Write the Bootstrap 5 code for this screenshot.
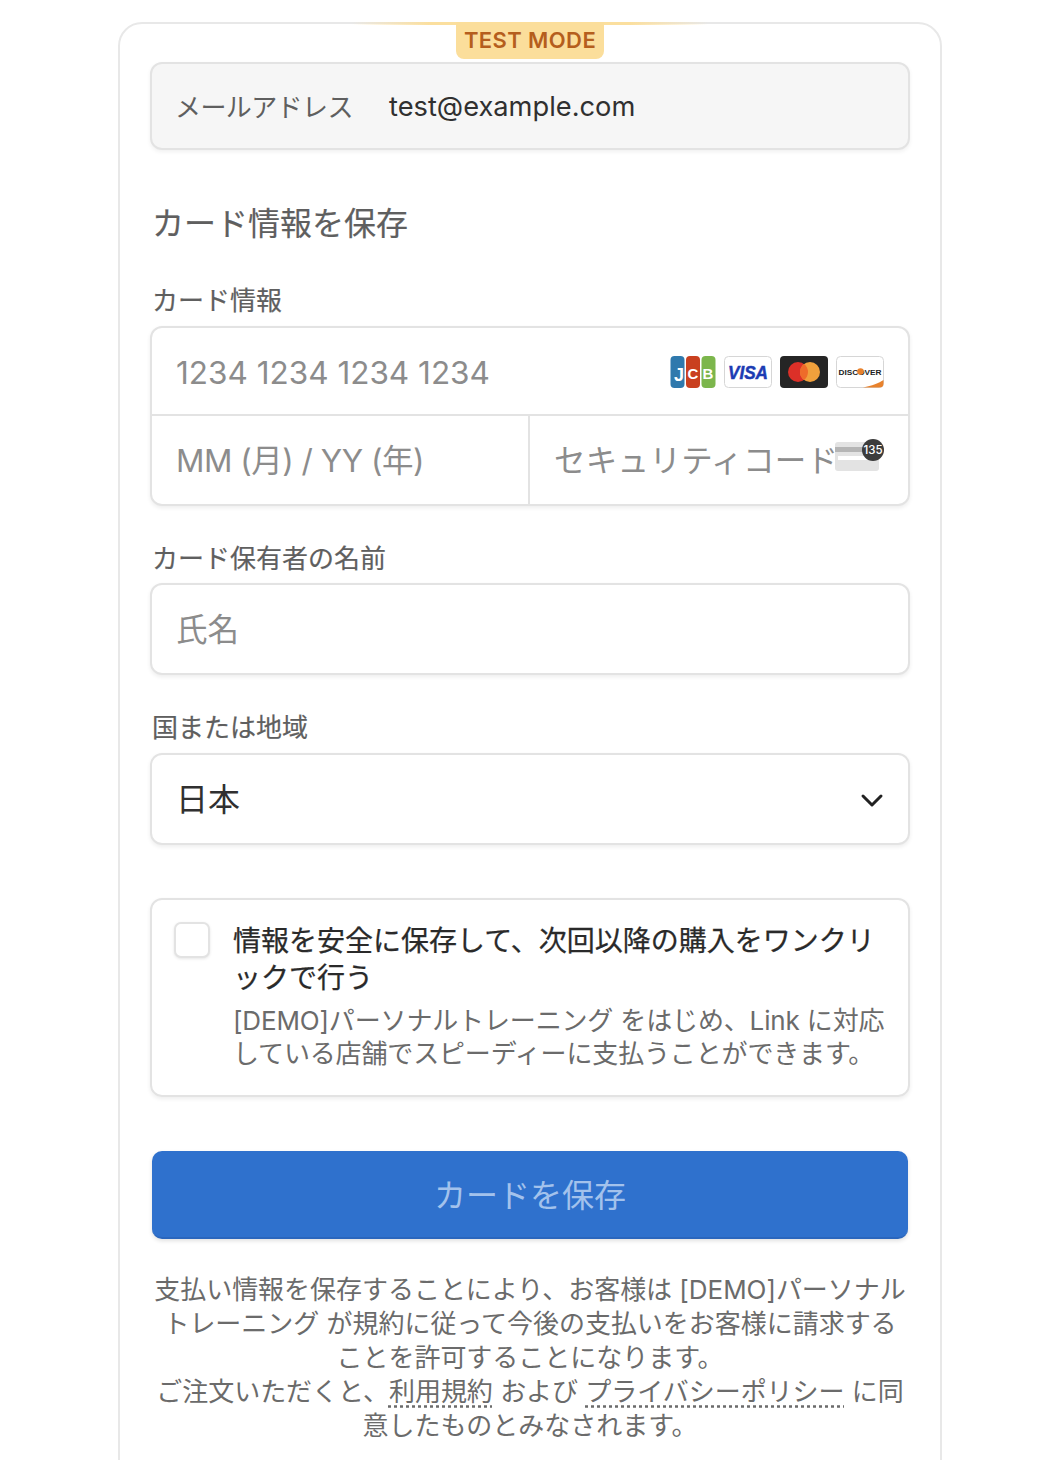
<!DOCTYPE html>
<html lang="ja">
<head>
<meta charset="utf-8">
<title>カードを保存</title>
<link href="https://cdn.jsdelivr.net/npm/bootstrap@5.3.0/dist/css/bootstrap.min.css" rel="stylesheet">
<style>
html,body{height:1460px;overflow:hidden;background:#fff}
body{font-family:Inter,"Noto Sans CJK JP",sans-serif;color:#303030;margin:0}
.shell{width:824px;height:1500px;margin:22px 0 0 118px;border:2px solid #e8e8e8;border-radius:24px;padding:38px 30px 0;position:relative}
.topline{position:absolute;left:232px;top:-2px;width:356px;height:3px;background:linear-gradient(90deg,transparent,#fbdf9e 22%,#fbdf9e 78%,transparent)}
.testtag{position:absolute;left:336px;top:-2px;width:148px;height:37px;background:#fbde9b;color:#b55e1d;font-size:22px;font-weight:600;line-height:37px;text-align:center;border-radius:0 0 8px 8px;letter-spacing:.4px}
.mailbox{height:88px;background:#f6f6f6;border:2px solid #e3e3e3;border-radius:12px;box-shadow:0 2px 4px rgba(0,0,0,.06);padding:2px 24px 0 23px;font-size:26px}
.mailbox .mlabel{color:#5f5f5f;width:213px;letter-spacing:-.6px}
.mailbox .mval{font-size:27.25px;color:#303030;margin-left:1px}
.headline{font-size:32px;font-weight:400;color:#5f5f5f;line-height:40px;margin:54px 0 0 2px;-webkit-text-stroke:.2px #5f5f5f}
.flabel{font-size:26px;color:#5f5f5f;line-height:32px;margin:36px 0 10px 2px;font-weight:400;-webkit-text-stroke:.2px #5f5f5f}
.flabel-first{margin-top:41px;margin-bottom:9px}
.flabel-tight{margin-top:37px;margin-bottom:8px}
.flabel-last{margin-top:37px;margin-bottom:9px}
.fieldbox{border:2px solid #e3e3e3;border-radius:12px;box-shadow:0 2px 4px rgba(0,0,0,.07);background:#fff;overflow:hidden}
.ph{color:#8c8c8c;font-size:31.5px;line-height:40px}
.ph-mixed{letter-spacing:-.5px}
.ph-code{letter-spacing:.3px}
.rowh{height:86px;padding:3px 24px 0}
.brandset{margin-bottom:2px}
.rowsplit{height:90px;border-top:2px solid #e3e3e3}
.splitcell{padding:2px 24px 0;position:relative;flex:1 1 0}
.splitcell-left{flex:none;width:376px}
.splitcell-right{border-left:2px solid #e3e3e3;padding-left:24px}
.brand{width:48px;height:32px;display:block}
.brand-jcb{width:46px}
.cvcicon{position:absolute;right:24px;top:23px}
.cvctext{position:relative;z-index:1}
.singleh{height:92px;padding:2px 24px 0}
.selh{height:92px;padding:2px 24px 0;font-size:32px;color:#303030}
.optbox{height:199px;border:2px solid #e3e3e3;border-radius:12px;box-shadow:0 2px 4px rgba(0,0,0,.07);padding:22px 18px 0 22px;margin-top:53px}
.tick{width:36px;height:36px;border:2px solid #e3e3e3;border-radius:7px;box-shadow:0 1px 3px rgba(0,0,0,.1);flex:none;margin-right:23px;background:#fff}
.opttitle{font-size:28px;font-weight:400;line-height:36.5px;color:#2a2a2a;margin-top:1px;-webkit-text-stroke:.25px #2a2a2a}
.optsub{font-size:26px;line-height:33px;color:#6b6b6b;margin-top:8px;letter-spacing:-.15px}
.savebtn{height:88px;width:756px;margin:54px 0 0 2px;padding-top:4px;background:#2f71cd;border:0;border-bottom:2px solid #2a66bd;border-radius:10px;box-shadow:0 2px 4px rgba(0,0,0,.12);color:#a3c2ec;font-size:32px;font-weight:400;font-family:inherit}
.legal{font-size:26px;line-height:34px;color:#6b6b6b;text-align:center;margin:34px 3px 0;letter-spacing:-.03px}
.legal a{display:inline-block;color:#6b6b6b;text-decoration:underline dotted;text-underline-offset:4px}
</style>
</head>
<body>
<div class="shell">
  <div class="topline"></div>
  <div class="testtag">TEST MODE</div>
  <div class="mailbox d-flex align-items-center"><span class="mlabel">メールアドレス</span><span class="mval">test@example.com</span></div>
  <div class="headline">カード情報を保存</div>
  <div class="flabel flabel-first">カード情報</div>
  <div class="fieldbox">
    <div class="rowh d-flex align-items-center justify-content-between">
      <span class="ph">1234 1234 1234 1234</span>
      <span class="d-flex gap-2 brandset">
        <svg class="brand brand-jcb" viewBox="0 0 46 32"><rect x="0.500" width="14" height="32" rx="4" fill="#2f79ad"/><rect x="16" width="14" height="32" rx="4" fill="#c9401f"/><rect x="31.500" width="14" height="32" rx="4" fill="#7cb64c"/><text x="9" y="25" font-size="18" font-weight="700" fill="#fff" text-anchor="middle" font-family="Liberation Sans">J</text><text x="23" y="22.500" font-size="15" font-weight="700" fill="#fff" text-anchor="middle" font-family="Liberation Sans">C</text><text x="38" y="22.500" font-size="15" font-weight="700" fill="#fff" text-anchor="middle" font-family="Liberation Sans">B</text></svg>
        <svg class="brand" viewBox="0 0 48 32"><rect x=".5" y=".5" width="47" height="31" rx="4" fill="#fff" stroke="#d6d6d6"/><text x="24" y="23" font-size="19" font-weight="700" font-style="italic" fill="#1c3bb3" text-anchor="middle" font-family="Liberation Sans" textLength="40" lengthAdjust="spacingAndGlyphs" stroke="#1c3bb3" stroke-width=".5">VISA</text></svg>
        <svg class="brand" viewBox="0 0 48 32"><rect width="48" height="32" rx="4" fill="#252525"/><circle cx="18" cy="16" r="10" fill="#dc3028"/><circle cx="30" cy="16" r="10" fill="#f0a03c"/><path d="M24 8a10 10 0 0 1 0 16a10 10 0 0 1 0-16z" fill="#ee6b2a"/></svg>
        <svg class="brand" viewBox="0 0 48 32"><rect x=".5" y=".5" width="47" height="31" rx="4" fill="#fff" stroke="#d6d6d6"/><path d="M27 31.500C36 30 43 27 47.500 24V27.500a4 4 0 0 1-4 4z" fill="#e8822d"/><text x="2.500" y="18.500" font-size="8" font-weight="700" fill="#222" font-family="Liberation Sans" textLength="43" lengthAdjust="spacingAndGlyphs">DISCOVER</text><circle cx="24.500" cy="15.500" r="3.300" fill="#e8822d"/></svg>
      </span>
    </div>
    <div class="rowsplit d-flex">
      <div class="splitcell splitcell-left d-flex align-items-center"><span class="ph ph-mixed">MM (月) / YY (年)</span></div>
      <div class="splitcell splitcell-right d-flex align-items-center"><span class="ph ph-code text-nowrap cvctext">セキュリティコード</span>
        <svg class="cvcicon" width="49" height="34" viewBox="0 0 49 34"><rect x="0" y="3" width="44" height="29" rx="3" fill="#e3e3e3"/><rect x="0" y="8" width="44" height="5" fill="#b5b5b5"/><rect x="3" y="17" width="30" height="4" fill="#fff"/><circle cx="38" cy="11" r="11" fill="#3c3c3c"/><text x="38" y="15" font-size="11.500" font-weight="500" fill="#fff" text-anchor="middle" font-family="Inter">135</text></svg>
      </div>
    </div>
  </div>
  <div class="flabel flabel-tight">カード保有者の名前</div>
  <div class="fieldbox singleh d-flex align-items-center"><span class="ph">氏名</span></div>
  <div class="flabel flabel-last">国または地域</div>
  <div class="fieldbox selh d-flex align-items-center justify-content-between"><span>日本</span>
    <svg width="24" height="24" viewBox="0 0 24 24" fill="none" stroke="#222" stroke-width="3" stroke-linecap="round" stroke-linejoin="round"><path d="M3 8l9 9 9-9"/></svg></div>
  <div class="optbox d-flex">
    <div class="tick"></div>
    <div>
      <div class="opttitle">情報を安全に保存して、次回以降の購入をワンクリックで行う</div>
      <div class="optsub">[DEMO]パーソナルトレーニング をはじめ、Link に対応している店舗でスピーディーに支払うことができます。</div>
    </div>
  </div>
  <button class="savebtn d-block" type="button">カードを保存</button>
  <div class="legal">支払い情報を保存することにより、お客様は [DEMO]パーソナルトレーニング が規約に従って今後の支払いをお客様に請求することを許可することになります。<br>ご注文いただくと、<a href="#">利用規約</a> および <a href="#">プライバシーポリシー</a> に同意したものとみなされます。</div>
</div>
<script src="https://cdn.jsdelivr.net/npm/bootstrap@5.3.0/dist/js/bootstrap.bundle.min.js"></script>
</body>
</html>
